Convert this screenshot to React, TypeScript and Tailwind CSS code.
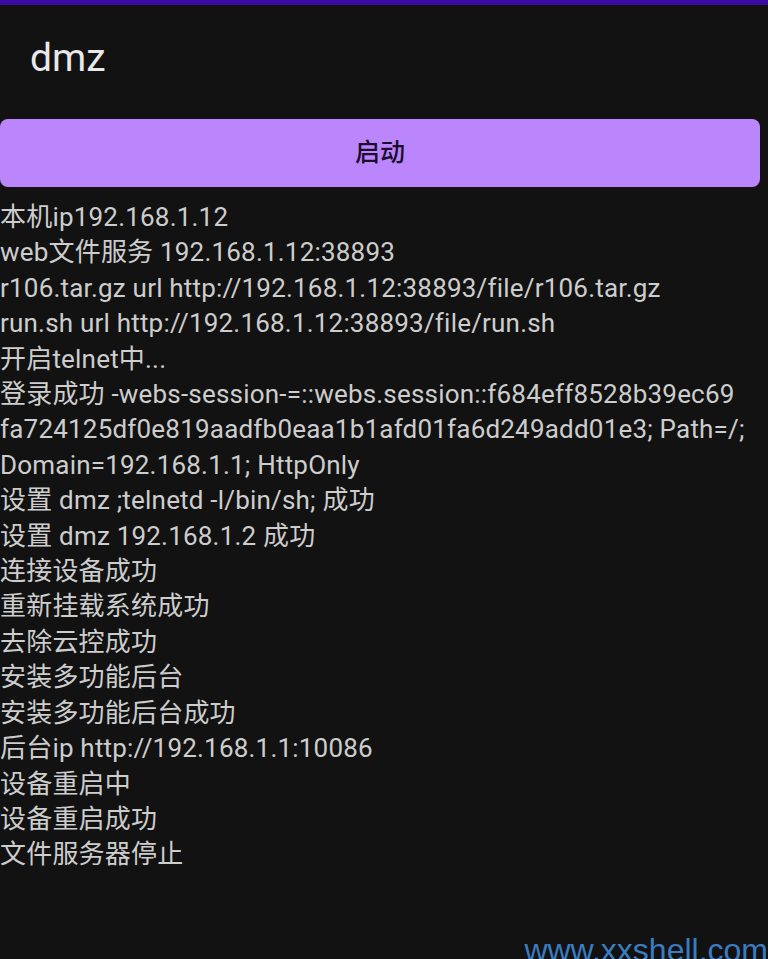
import React from "react";

const lines = [
  "本机ip192.168.1.12",
  "web文件服务 192.168.1.12:38893",
  "r106.tar.gz url http://192.168.1.12:38893/file/r106.tar.gz",
  "run.sh url http://192.168.1.12:38893/file/run.sh",
  "开启telnet中...",
  "登录成功 -webs-session-=::webs.session::f684eff8528b39ec69",
  "fa724125df0e819aadfb0eaa1b1afd01fa6d249add01e3; Path=/;",
  "Domain=192.168.1.1; HttpOnly",
  "设置 dmz ;telnetd -l/bin/sh; 成功",
  "设置 dmz 192.168.1.2 成功",
  "连接设备成功",
  "重新挂载系统成功",
  "去除云控成功",
  "安装多功能后台",
  "安装多功能后台成功",
  "后台ip http://192.168.1.1:10086",
  "设备重启中",
  "设备重启成功",
  "文件服务器停止",
];

export default function App() {
  return (
    <div
      className="relative w-[768px] h-[959px] overflow-hidden bg-[#121212]"
      style={{ fontFamily: '"Roboto", "Noto Sans CJK SC", sans-serif' }}
    >
      <div className="h-[5px] bg-[#3a0ca3]" />
      <div className="pl-[30px] pt-[30px] h-[114px] text-[39px] leading-[46px] text-[#e8e8e8]">
        dmz
      </div>
      <div className="w-[760px] h-[68px] rounded-[8px] bg-[#bb86fc] flex items-center justify-center text-[25px] font-medium text-[#1c0d2e]">
        启动
      </div>
      <div className="mt-[13px] text-[26px] leading-[35.4px] tracking-[0.2px] text-[#cdcdcd] whitespace-nowrap">
        {lines.map((l, i) => (
          <div key={i}>{l}</div>
        ))}
      </div>
      <div
        className="absolute right-0 bottom-[-8px] text-[32px] leading-[34px] text-[#3b7cc0]"
        style={{ fontFamily: '"Liberation Sans", Arial, sans-serif' }}
      >
        www.xxshell.com
      </div>
    </div>
  );
}
